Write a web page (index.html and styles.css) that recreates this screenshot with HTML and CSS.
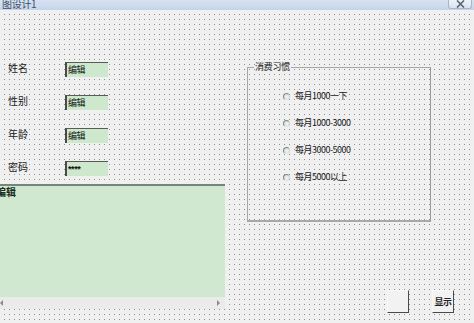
FILE: index.html
```html
<!DOCTYPE html>
<html lang="zh-CN">
<head>
<meta charset="utf-8">
<title>图设计1</title>
<link rel="stylesheet" href="styles.css">
</head>
<body>
<div class="window">
  <div class="titlebar">
    <span class="title">图设计1</span>
    <span class="close">
      <svg width="9" height="8" viewBox="0 0 9 8"><path d="M1 0.5 L8 7.5 M8 0.5 L1 7.5" stroke="#5a6270" stroke-width="1.6" fill="none"/></svg>
    </span>
  </div>
  <div class="client">
    <div class="left">
      <div class="row"><span class="label">姓名</span><span class="edit">编辑</span></div>
      <div class="row"><span class="label">性别</span><span class="edit">编辑</span></div>
      <div class="row"><span class="label">年龄</span><span class="edit">编辑</span></div>
      <div class="row"><span class="label">密码</span><span class="edit pwd">****</span></div>
      <div class="memo">
        <div class="memo-body">编辑</div>
        <div class="hscroll">
          <span class="arrow-l"></span>
          <span class="arrow-r"></span>
        </div>
      </div>
    </div>
    <div class="right">
      <fieldset class="group">
        <legend>消费习惯</legend>
        <div class="radio"><span class="dot"></span><span>每月1000一下</span></div>
        <div class="radio"><span class="dot"></span><span>每月1000-3000</span></div>
        <div class="radio"><span class="dot"></span><span>每月3000-5000</span></div>
        <div class="radio"><span class="dot"></span><span>每月5000以上</span></div>
      </fieldset>
      <div class="buttons">
        <button class="btn blank" type="button"></button>
        <button class="btn" type="button">显示</button>
      </div>
    </div>
  </div>
</div>
</body>
</html>
```
FILE: styles.css
```css
html, body {
  margin: 0;
  padding: 0;
}
body {
  width: 474px;
  height: 323px;
  overflow: hidden;
  font-family: "Noto Sans CJK SC", "Liberation Sans", sans-serif;
  font-size: 9px;
  color: #1a1a1a;
  background: #f0f0f0;
}
.window {
  width: 474px;
  height: 323px;
  overflow: hidden;
}
.titlebar {
  height: 10px;
  display: flex;
  justify-content: space-between;
  background: linear-gradient(#d6e2f1, #c4d5ea);
  overflow: hidden;
}
.title {
  font-size: 10px;
  line-height: 10px;
  margin-top: -1px;
  margin-left: 2px;
  color: #3f4f68;
  letter-spacing: -0.3px;
}
.close {
  width: 24px;
  height: 9px;
  margin-right: 2px;
  box-sizing: border-box;
  border: 1px solid #a9b6c8;
  border-top: none;
  border-radius: 0 0 3px 3px;
  background: linear-gradient(#eef3f9, #d8e2ee);
  display: flex;
  justify-content: center;
  align-items: flex-start;
}
.client {
  height: 313px;
  display: grid;
  grid-template-columns: 225px 1fr;
  column-gap: 22px;
  background-color: #8e8e8e;
  background-image:
    linear-gradient(90deg, transparent 1px, #f0f0f0 1px),
    linear-gradient(transparent 1px, #f0f0f0 1px);
  background-size: 5px 5px;
  background-position: 4px 4px;
}
.left {
  padding-top: 52px;
  display: flex;
  flex-direction: column;
}
.row {
  height: 15px;
  margin-bottom: 18px;
  display: flex;
  align-items: flex-start;
}
.row:nth-child(4) {
  margin-bottom: 8px;
}
.label {
  width: 65px;
  padding-left: 8px;
  box-sizing: border-box;
  font-size: 10px;
  line-height: 12px;
  color: #222;
}
.edit {
  width: 43px;
  height: 15px;
  box-sizing: border-box;
  background: #cde8cd;
  border-top: 1px solid #5a5a5a;
  border-left: 2px solid #4a4a4a;
  font-size: 9px;
  line-height: 13px;
  padding-left: 1px;
  color: #111;
  letter-spacing: -0.5px;
}
.pwd {
  font-family: "Liberation Sans", sans-serif;
  font-weight: bold;
  font-size: 9px;
  letter-spacing: -0.4px;
  line-height: 14px;
}
.memo {
  margin-left: -5px;
  width: 230px;
  height: 125px;
  display: flex;
  flex-direction: column;
}
.memo-body {
  flex: 1;
  background: #cfe8cf;
  border-top: 2px solid #76857a;
  font-size: 10px;
  line-height: 11px;
  font-weight: bold;
  color: #1a2a1a;
  padding-left: 1px;
}
.hscroll {
  height: 12px;
  background: #ebebeb;
  display: flex;
  justify-content: space-between;
  align-items: center;
  padding: 0 5px 0 5px;
}
.arrow-l {
  width: 0;
  height: 0;
  border-top: 3px solid transparent;
  border-bottom: 3px solid transparent;
  border-right: 3px solid #8a8a8a;
}
.arrow-r {
  width: 0;
  height: 0;
  border-top: 3px solid transparent;
  border-bottom: 3px solid transparent;
  border-left: 3px solid #8a8a8a;
}
.right {
  padding-top: 51px;
  display: flex;
  flex-direction: column;
}
.group {
  width: 184px;
  height: 161px;
  box-sizing: border-box;
  margin: 0;
  padding: 17px 0 0 35px;
  border: 1px solid #a6a6a6;
  border-right-color: #9a9a9a;
  border-bottom: 2px solid #a8a8a8;
}
.group legend {
  font-size: 9px;
  line-height: 12px;
  padding: 0 1px;
  margin-left: -29px;
  color: #222;
  letter-spacing: -0.3px;
}
.radio {
  height: 12px;
  margin-bottom: 15px;
  display: flex;
  align-items: center;
  gap: 5px;
  letter-spacing: -0.5px;
  line-height: 12px;
}
.dot {
  width: 7px;
  height: 7px;
  box-sizing: border-box;
  border-radius: 50%;
  border: 1px solid;
  border-color: #7d8c80 #cbd6cc #e2e8e2 #7d8c80;
  background: radial-gradient(circle at 60% 60%, #f4f7f4, #c9d6ca);
}
.buttons {
  margin-top: 68px;
  margin-left: 140px;
  display: flex;
  gap: 23px;
}
.btn {
  width: 22px;
  height: 23px;
  padding: 0;
  margin: 0;
  box-sizing: border-box;
  background: #f2f2f2;
  border: 1px solid;
  border-color: #f8f8f8 #4a4a4a #4a4a4a #f8f8f8;
  font-family: "Noto Sans CJK SC", sans-serif;
  font-size: 9px;
  font-weight: bold;
  color: #222;
  letter-spacing: -0.5px;
}
```
